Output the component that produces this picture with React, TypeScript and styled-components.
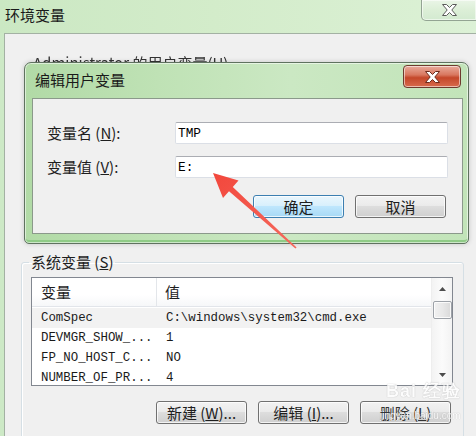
import React from "react";
import styled, { createGlobalStyle } from "styled-components";

const UI = `"Noto Sans CJK SC", "Noto Sans", sans-serif`;
const MONO = `"Liberation Mono", "DejaVu Sans Mono", monospace`;

const Global = createGlobalStyle`
  html, body { margin: 0; padding: 0; background: #f0f0f0; }
  body { width: 476px; height: 436px; overflow: hidden; font-family: ${UI}; }
  * { box-sizing: border-box; }
`;

const Window = styled.div`
  position: relative;
  width: 476px;
  height: 436px;
  overflow: hidden;
  display: flex;
  flex-direction: column;
  background: linear-gradient(90deg, #cde9c6 0%, #d6eed0 50%, #def2d9 100%);
  font-family: ${UI};
  color: #1e1e1e;
`;

const TitleBar = styled.div`
  height: 33px;
  flex: none;
  display: flex;
  align-items: flex-start;
  justify-content: space-between;
  background: linear-gradient(90deg, #cbe8c3 0%, #d3ecca 45%, #dcf1d6 100%);
`;

const Title = styled.div`
  font-size: 15px;
  line-height: 20px;
  padding: 5px 0 0 5px;
  color: #1a1a1a;
`;

const CloseButton = styled.div<{ $danger?: boolean }>`
  flex: none;
  display: flex;
  align-items: center;
  justify-content: center;
  width: ${(p) => (p.$danger ? "58px" : "56px")};
  height: ${(p) => (p.$danger ? "23px" : "21px")};
  margin-top: ${(p) => (p.$danger ? "2px" : "0")};
  margin-right: ${(p) => (p.$danger ? "2px" : "-1px")};
  border: 1px solid ${(p) => (p.$danger ? "#6e3a2e" : "#93a493")};
  border-top: ${(p) => (p.$danger ? "1px solid #6e3a2e" : "none")};
  border-radius: ${(p) => (p.$danger ? "4px" : "0 0 0 5px")};
  background: ${(p) =>
    p.$danger
      ? "linear-gradient(180deg, #e8ab9c 0%, #d9775f 42%, #c4472a 56%, #d86a4c 100%)"
      : "linear-gradient(180deg, #eaf5e7 0%, #dcefd7 50%, #d3ead0 100%)"};
  box-shadow: inset 0 0 0 1px rgba(255, 255, 255, 0.55);
`;

const Client = styled.div`
  flex: 1;
  margin-left: 4px;
  background: #f0f0f0;
  border-top: 1px solid #a3b1a3;
  border-left: 1px solid #a3b1a3;
  display: flex;
  flex-direction: column;
`;

const UserLabel = styled.div`
  margin: 19px 0 0 28px;
  font-size: 15px;
  line-height: 20px;
  color: #333;
  filter: blur(0.4px);
`;

const Group = styled.fieldset`
  margin: 180px 0 0 16px;
  width: 443px;
  min-width: 0;
  padding: 0 0 20px 0;
  border: 1px solid #d5dfe5;
  border-radius: 3px;
  box-shadow: inset 1px 1px 0 #fff;
`;

const Legend = styled.legend`
  margin-left: 7px;
  padding: 0 2px;
  font-size: 15px;
  line-height: 18px;
  color: #1e1e1e;
`;

const ListBox = styled.div`
  margin: 6px 0 0 9px;
  width: 422px;
  height: 109px;
  border: 1px solid #828790;
  background: #fff;
  display: grid;
  grid-template-columns: 1fr 21px;
  overflow: hidden;
`;

const ListBody = styled.div`
  display: flex;
  flex-direction: column;
  overflow: hidden;
`;

const HeaderRow = styled.div`
  flex: none;
  height: 29px;
  display: flex;
  background: linear-gradient(180deg, #ffffff 0%, #ffffff 60%, #f6f7f9 100%);
  border-bottom: 1px solid #e2e5ea;
  margin-bottom: 1px;
`;

const HeaderCell = styled.div<{ $w?: number }>`
  flex: ${(p) => (p.$w ? `0 0 ${p.$w}px` : "1")};
  padding: 1px 0 0 ${(p) => (p.$w ? 9 : 8)}px;
  font-size: 15px;
  line-height: 26px;
  color: #1e1e1e;
  border-right: ${(p) => (p.$w ? "1px solid #e3e6ea" : "none")};
`;

const Row = styled.div<{ $hl?: boolean }>`
  flex: none;
  height: 20px;
  display: flex;
  align-items: center;
  background: ${(p) => (p.$hl ? "#f2f2f2" : "transparent")};
`;

const Cell = styled.div<{ $w?: number }>`
  flex: ${(p) => (p.$w ? `0 0 ${p.$w}px` : "1")};
  padding-left: 9px;
  font-family: ${MONO};
  font-size: 12.4px;
  line-height: 20px;
  white-space: nowrap;
  overflow: hidden;
  color: #1a1a1a;
`;

const ScrollBar = styled.div`
  display: flex;
  flex-direction: column;
  align-items: center;
  background: linear-gradient(90deg, #f3f3f3 0%, #fbfbfb 50%, #f3f3f3 100%);
  border-left: 1px solid #eeeeee;
`;

const ScrollArrow = styled.div`
  height: 21px;
  width: 100%;
  display: flex;
  align-items: center;
  justify-content: center;
`;

const Thumb = styled.div`
  width: 19px;
  height: 18px;
  margin-top: 2px;
  border: 1px solid #9da2a8;
  border-radius: 2px;
  background: linear-gradient(90deg, #f1f1f1 0%, #e8e8e8 50%, #d9d9d9 100%);
  box-shadow: inset 0 0 0 1px rgba(255, 255, 255, 0.8);
`;

const Spacer = styled.div`
  flex: 1;
`;

const ButtonRow = styled.div<{ $top: number; $right: number }>`
  display: flex;
  justify-content: flex-end;
  gap: 11px;
  margin-top: ${(p) => p.$top}px;
  padding-right: ${(p) => p.$right}px;
`;

const Button = styled.button<{ $focused?: boolean; $dim?: boolean }>`
  width: 91px;
  height: 23px;
  padding: 0;
  font-family: ${UI};
  font-size: 15px;
  line-height: 20px;
  color: ${(p) => (p.$dim ? "#333" : "#1e1e1e")};
  border: 1px solid ${(p) => (p.$focused ? "#3c7fb1" : "#707070")};
  border-radius: 3px;
  background: ${(p) =>
    p.$focused
      ? "linear-gradient(180deg, #eaf6fd 0%, #d9f0fc 45%, #bee6fd 50%, #a7d9f5 100%)"
      : "linear-gradient(180deg, #f2f2f2 0%, #ebebeb 45%, #dddddd 50%, #cfcfcf 100%)"};
  box-shadow: inset 0 0 0 1px rgba(255, 255, 255, 0.75);
  white-space: nowrap;
`;

const Dialog = styled.div`
  position: absolute;
  left: 24px;
  top: 62px;
  width: 445px;
  height: 182px;
  border: 1px solid #5f725f;
  border-radius: 7px 7px 5px 5px;
  background: linear-gradient(90deg, #b1daa6 0%, #bfe2b5 30%, #cbe8c3 60%, #c2e4b9 100%);
  box-shadow: inset 0 0 0 1px rgba(255, 255, 255, 0.55), inset 0 -3px 0 #8fcb86, 0 0 5px rgba(0, 0, 0, 0.18);
  display: flex;
  flex-direction: column;
  padding: 0 5px 9px 7px;
  z-index: 2;
`;

const DialogTitleBar = styled.div`
  height: 35px;
  flex: none;
  display: flex;
  align-items: flex-start;
  justify-content: space-between;
`;

const DialogTitle = styled.div`
  font-size: 15px;
  line-height: 20px;
  padding: 7px 0 0 3px;
  color: #1a1a1a;
`;

const DialogClient = styled.div`
  flex: 1;
  border: 1px solid #8b998b;
  background: #f0f0f0;
  display: flex;
  flex-direction: column;
`;

const Form = styled.div`
  display: grid;
  grid-template-columns: 128px 273px;
  row-gap: 12px;
  align-items: center;
  padding: 23px 0 0 14px;
`;

const Label = styled.label`
  font-size: 15px;
  line-height: 20px;
  color: #1e1e1e;
`;

const TextInput = styled.input`
  width: 273px;
  height: 22px;
  padding: 0 0 0 2px;
  border: 1px solid #dbdfe6;
  border-top-color: #abadb3;
  border-radius: 2px;
  background: #fff;
  font-family: ${MONO};
  font-size: 12.8px;
  font-weight: normal;
  color: #000;
  outline: none;
`;

const Arrow = styled.svg`
  position: absolute;
  left: 200px;
  top: 165px;
  z-index: 3;
`;

const Watermark = styled.div`
  position: absolute;
  left: 386px;
  top: 382px;
  z-index: 3;
  display: flex;
  flex-direction: column;
  align-items: flex-start;
  color: #ffffff;
  text-shadow: 0 0 1px rgba(120, 120, 120, 0.7);
  opacity: 0.85;
  pointer-events: none;
`;

const WmMain = styled.div`
  font-family: "Liberation Sans", sans-serif;
  font-size: 18px;
  line-height: 18px;
  font-weight: bold;
  letter-spacing: 1px;
`;

const WmSub = styled.div`
  font-family: "Liberation Sans", sans-serif;
  font-size: 10px;
  line-height: 12px;
  margin-top: 10px;
  margin-left: -6px;
`;

const XGlyph = ({ stroke }: { stroke: string }) => (
  <svg width="15" height="12" viewBox="0 0 15 12">
    <polygon
      points="0.5,0.5 4.5,0.5 7.5,3.5 10.5,0.5 14.5,0.5 9.8,6 14.5,11.5 10.5,11.5 7.5,8.5 4.5,11.5 0.5,11.5 5.2,6"
      fill="#ffffff"
      stroke={stroke}
      strokeWidth="1"
    />
  </svg>
);

const Tri = ({ up }: { up?: boolean }) => (
  <svg width="7" height="4" viewBox="0 0 7 4">
    <polygon points={up ? "0,4 3.5,0 7,4" : "0,0 7,0 3.5,4"} fill="#4d4d4d" />
  </svg>
);

const U = styled.span`
  text-decoration: underline;
`;

const rows = [
  { name: "ComSpec", value: "C:\\windows\\system32\\cmd.exe", hl: true },
  { name: "DEVMGR_SHOW_...", value: "1" },
  { name: "FP_NO_HOST_C...", value: "NO" },
  { name: "NUMBER_OF_PR...", value: "4" },
  { name: "OS", value: "Windows_NT" },
];

export default function App() {
  return (
    <>
      <Global />
      <Window>
        <TitleBar>
          <Title>环境变量</Title>
          <CloseButton>
            <XGlyph stroke="#5a5a5a" />
          </CloseButton>
        </TitleBar>
        <Client>
          <UserLabel>Administrator 的用户变量(U)</UserLabel>
          <Group>
            <Legend>
              系统变量 (<U>S</U>)
            </Legend>
            <ListBox>
              <ListBody>
                <HeaderRow>
                  <HeaderCell $w={125}>变量</HeaderCell>
                  <HeaderCell>值</HeaderCell>
                </HeaderRow>
                {rows.map((r) => (
                  <Row key={r.name} $hl={r.hl}>
                    <Cell $w={125}>{r.name}</Cell>
                    <Cell>{r.value}</Cell>
                  </Row>
                ))}
              </ListBody>
              <ScrollBar>
                <ScrollArrow>
                  <Tri up />
                </ScrollArrow>
                <Thumb />
                <Spacer />
                <ScrollArrow>
                  <Tri />
                </ScrollArrow>
              </ScrollBar>
            </ListBox>
            <ButtonRow $top={15} $right={12}>
              <Button>
                新建 (<U>W</U>)...
              </Button>
              <Button>
                编辑 (<U>I</U>)...
              </Button>
              <Button $dim>
                删除 (<U>L</U>)
              </Button>
            </ButtonRow>
          </Group>
        </Client>

        <Dialog>
          <DialogTitleBar>
            <DialogTitle>编辑用户变量</DialogTitle>
            <CloseButton $danger>
              <XGlyph stroke="#6b2a1c" />
            </CloseButton>
          </DialogTitleBar>
          <DialogClient>
            <Form>
              <Label>
                变量名 (<U>N</U>):
              </Label>
              <TextInput defaultValue="TMP" readOnly />
              <Label>
                变量值 (<U>V</U>):
              </Label>
              <TextInput defaultValue="E:" readOnly />
            </Form>
            <ButtonRow $top={17} $right={16}>
              <Button $focused>确定</Button>
              <Button>取消</Button>
            </ButtonRow>
          </DialogClient>
        </Dialog>

        <Arrow width="105" height="90" viewBox="0 0 105 90">
          <defs>
            <linearGradient id="ag" x1="0" y1="0" x2="1" y2="1">
              <stop offset="0" stopColor="#f2473c" />
              <stop offset="1" stopColor="#f56a5e" />
            </linearGradient>
          </defs>
          <path
            d="M13,8 L38.5,15.5 L32.8,22 L96.6,82.4 L95.4,83.6 L29,26.2 L23,33 Z"
            fill="url(#ag)"
          />
        </Arrow>

        <Watermark>
          <WmMain>Bai 经验</WmMain>
          <WmSub>jingyan.baidu.com</WmSub>
        </Watermark>
      </Window>
    </>
  );
}
